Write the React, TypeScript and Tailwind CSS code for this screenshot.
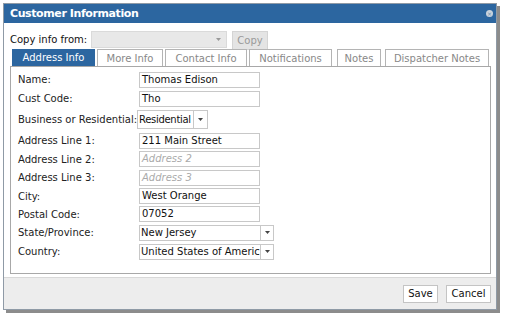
import React from "react";

const font = { fontFamily: '"DejaVu Sans", Verdana, sans-serif' };

function Arrow() {
  return (
    <svg width="5" height="3" viewBox="0 0 5 3">
      <path d="M0 0h5L2.5 3z" fill="#444" />
    </svg>
  );
}

function Row({ label, children, h }: { label: string; children: React.ReactNode; h: string }) {
  return (
    <div className={`flex items-center ${h}`}>
      <div className="w-[121px] shrink-0 text-[10px] text-[#222]">{label}</div>
      {children}
    </div>
  );
}

function Input({ value, placeholder }: { value?: string; placeholder?: string }) {
  return (
    <div className="w-[121px] h-[16px] border border-[#c8c8c8] bg-white flex items-center px-[2px] text-[10px] leading-none">
      {value ? <span className="text-[#111]">{value}</span> : <span className="italic text-[#aaa]">{placeholder}</span>}
    </div>
  );
}

function Select({ value, w, tw, fs }: { value: string; w: string; tw: string; fs: string }) {
  return (
    <div className={`${w} flex items-stretch border border-[#c8c8c8] bg-white ${fs} leading-none`}>
      <div className={`${tw} flex items-center px-[1px] overflow-hidden whitespace-nowrap text-[#111]`}>{value}</div>
      <div className="flex-1 border-l border-[#c8c8c8] flex items-center justify-center">
        <Arrow />
      </div>
    </div>
  );
}

export default function App() {
  const tabs = [
    { t: "More Info", c: "w-[66px]" },
    { t: "Contact Info", c: "w-[82px]" },
    { t: "Notifications", c: "w-[83px]" },
    { t: "Notes", c: "w-[44px] ml-[3px]" },
    { t: "Dispatcher Notes", c: "w-[104px] ml-[2px]" },
  ];
  return (
    <div className="w-[506px] h-[316px] bg-white relative" style={font}>
      <div className="pt-[3px] pl-[3px]">
        <div className="w-[494px] h-[307px] border border-[#8f9aa6] bg-white flex flex-col shadow-[3px_3px_0_#8c8c8c]">
          <div className="h-[20px] bg-[#2c66a0] flex items-center justify-between pl-[6px] pr-[3px]">
            <span className="text-white font-bold text-[11px] tracking-[-0.4px] pt-[1px]">Customer Information</span>
            <span className="w-[7px] h-[7px] rounded-full bg-[#c9d3dd] flex items-center justify-center text-[6px] leading-none text-[#6f8fb0]">×</span>
          </div>
          <div className="flex-1 flex flex-col px-[6px]">
            <div className="flex items-start h-[26px] pt-[8px]">
              <span className="text-[10px] text-[#111] w-[81px] h-[17px] flex items-center">Copy info from:</span>
              <div className="w-[136px] h-[17px] bg-[#e8e8e8] border border-[#dadada] flex items-center justify-end pr-[5px]">
                <svg width="5" height="3" viewBox="0 0 5 3"><path d="M0 0h5L2.5 3z" fill="#999" /></svg>
              </div>
              <div className="ml-[5px] w-[36px] h-[19px] bg-[#e4e4e4] border border-[#d4d4d4] flex items-center justify-center text-[10px] text-[#999]">Copy</div>
            </div>
            <div className="flex items-end h-[17px] pl-[2px] gap-[2px]">
              <div className="w-[83px] h-[17px] bg-[#2c66a0] text-white text-[10px] flex items-center justify-center">Address Info</div>
              {tabs.map((t) => (
                <div key={t.t} className={`${t.c} h-[17px] border border-[#b4b4b4] border-b-0 bg-white text-[10px] text-[#888] flex items-center justify-center`}>
                  {t.t}
                </div>
              ))}
            </div>
            <div className="w-[481px] h-[208px] border border-[#a8a8a8] pl-[7px] pt-[3px] flex flex-col">
              <Row label="Name:" h="h-[19px]"><Input value="Thomas Edison" /></Row>
              <Row label="Cust Code:" h="h-[19px]"><Input value="Tho" /></Row>
              <Row label="Business or Residential:" h="h-[23px]">
                <div className="-ml-[2px] h-[19px] flex"><Select value="Residential" w="w-[71px]" tw="w-[55px]" fs="text-[10px] tracking-[-0.3px]" /></div>
              </Row>
              <Row label="Address Line 1:" h="h-[19px]"><Input value="211 Main Street" /></Row>
              <Row label="Address Line 2:" h="h-[18px]"><Input placeholder="Address 2" /></Row>
              <Row label="Address Line 3:" h="h-[19px]"><Input placeholder="Address 3" /></Row>
              <Row label="City:" h="h-[18px]"><Input value="West Orange" /></Row>
              <Row label="Postal Code:" h="h-[18px]"><Input value="07052" /></Row>
              <Row label="State/Province:" h="h-[19px]">
                <div className="h-[16px] flex"><Select value="New Jersey" w="w-[135px]" tw="w-[120px]" fs="text-[10px]" /></div>
              </Row>
              <Row label="Country:" h="h-[19px]">
                <div className="h-[16px] flex"><Select value="United States of Americ" w="w-[135px]" tw="w-[120px]" fs="text-[10px]" /></div>
              </Row>
            </div>
          </div>
          <div className="h-[33px] mt-[3px] bg-[#ededed] border-t border-[#d8d8d8] flex items-center justify-end gap-[8px] pr-[5px]">
            <div className="w-[35px] h-[18px] bg-white border border-[#c4c4c4] text-[10px] text-[#111] flex items-center justify-center">Save</div>
            <div className="w-[45px] h-[18px] bg-white border border-[#c4c4c4] text-[10px] text-[#111] flex items-center justify-center">Cancel</div>
          </div>
        </div>
      </div>
    </div>
  );
}
